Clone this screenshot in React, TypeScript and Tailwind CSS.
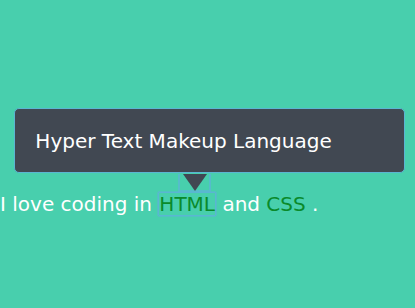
export default function App() {
  return (
    <div className="h-[308px] w-[415px] overflow-hidden bg-[#48cfad] font-['DejaVu_Sans',Verdana,sans-serif] text-white">
      <p className="pt-[191px] text-[20px] leading-[26px] whitespace-nowrap">
        I love coding in{' '}
        <span className="relative inline-block rounded-[1px] border border-[#5ab6d2] leading-[22px] text-[#0a8a2b] outline-1 outline-[#5ab6d2]/60">
          HTML
          <span className="absolute bottom-[calc(100%+1px)] left-[19px] flex h-[18px] w-[33px] justify-center border-2 border-t-0 border-[#5ab6d2]/80">
            <span className="h-0 w-0 border-x-[12px] border-t-[17px] border-x-transparent border-t-[#414852]" />
          </span>
          <span className="absolute bottom-[42px] left-[-145px] flex h-[65px] w-[391px] items-center rounded-[5px] border border-[#5ab6d2] bg-[#414852] pl-[20px] text-[20px] text-white">
            Hyper Text Makeup Language
          </span>
        </span>{' '}
        and <span className="text-[#0a8a2b]">CSS</span> .
      </p>
    </div>
  );
}
